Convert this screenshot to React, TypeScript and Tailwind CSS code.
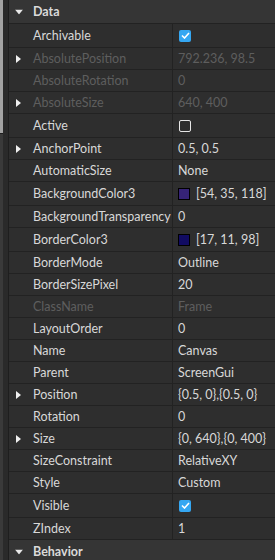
import React from 'react'

type Kind = 'text' | 'check' | 'color'

interface Prop {
  name: string
  value: string
  kind?: Kind
  checked?: boolean
  swatch?: string
  expand?: boolean
  disabled?: boolean
}

const props: Prop[] = [
  { name: 'Archivable', value: '', kind: 'check', checked: true },
  { name: 'AbsolutePosition', value: '792.236, 98.5', expand: true, disabled: true },
  { name: 'AbsoluteRotation', value: '0', disabled: true },
  { name: 'AbsoluteSize', value: '640, 400', expand: true, disabled: true },
  { name: 'Active', value: '', kind: 'check', checked: false },
  { name: 'AnchorPoint', value: '0.5, 0.5', expand: true },
  { name: 'AutomaticSize', value: 'None' },
  { name: 'BackgroundColor3', value: '[54, 35, 118]', kind: 'color', swatch: '#362376' },
  { name: 'BackgroundTransparency', value: '0' },
  { name: 'BorderColor3', value: '[17, 11, 98]', kind: 'color', swatch: '#110b62' },
  { name: 'BorderMode', value: 'Outline' },
  { name: 'BorderSizePixel', value: '20' },
  { name: 'ClassName', value: 'Frame', disabled: true },
  { name: 'LayoutOrder', value: '0' },
  { name: 'Name', value: 'Canvas' },
  { name: 'Parent', value: 'ScreenGui' },
  { name: 'Position', value: '{0.5, 0},{0.5, 0}', expand: true },
  { name: 'Rotation', value: '0' },
  { name: 'Size', value: '{0, 640},{0, 400}', expand: true },
  { name: 'SizeConstraint', value: 'RelativeXY' },
  { name: 'Style', value: 'Custom' },
  { name: 'Visible', value: '', kind: 'check', checked: true },
  { name: 'ZIndex', value: '1' },
]

function RightArrow() {
  return (
    <svg width="5" height="8" viewBox="0 0 5 8" className="absolute left-[7px] top-1/2 -translate-y-1/2">
      <path d="M0 0 L5 4 L0 8 Z" fill="#f0f0f0" />
    </svg>
  )
}

function DownArrow() {
  return (
    <svg width="8" height="5" viewBox="0 0 8 5" className="absolute left-[6px] top-1/2 -translate-y-1/2">
      <path d="M0 0 L8 0 L4 5 Z" fill="#e8e8e8" />
    </svg>
  )
}

function Checkbox({ checked }: { checked?: boolean }) {
  if (!checked) {
    return <div className="h-[12px] w-[12px] rounded-[2px] border border-[#e6e6e6]" />
  }
  return (
    <div className="flex h-[12px] w-[12px] items-center justify-center rounded-[2px] bg-[#35a7f2]">
      <svg width="9" height="7" viewBox="0 0 9 7">
        <path d="M1 3.5 L3.5 6 L8 1" fill="none" stroke="#ffffff" strokeWidth="1.6" />
      </svg>
    </div>
  )
}

function Header({ title }: { title: string }) {
  return (
    <div className="relative flex h-[24px] shrink-0 items-center border-b border-[#222222] bg-[#353535]">
      <DownArrow />
      <span className="pl-[24px] font-bold text-[#dadada]">{title}</span>
    </div>
  )
}

function Row({ p }: { p: Prop }) {
  const kind = p.kind ?? 'text'
  const h = kind === 'text' ? 'h-[22px]' : 'h-[24px]'
  const tone = p.disabled ? 'text-[#5e5e5e]' : 'text-[#d8d8d8]'
  return (
    <div className={`flex ${h} shrink-0 border-b border-[#222222] bg-[#2e2e2e]`}>
      <div className="relative flex w-[164px] shrink-0 items-center overflow-hidden border-r border-[#222222]">
        {p.expand && <RightArrow />}
        <span className={`pl-[24px] whitespace-nowrap ${tone}`}>{p.name}</span>
      </div>
      <div className={`flex min-w-0 flex-1 items-center pl-[5px] whitespace-nowrap ${tone}`}>
        {kind === 'check' && (
          <div className="pl-[1px]">
            <Checkbox checked={p.checked} />
          </div>
        )}
        {kind === 'color' && (
          <>
            <div className="h-[12px] w-[12px] border border-black" style={{ backgroundColor: p.swatch }} />
            <span className="pl-[6px]">{p.value}</span>
          </>
        )}
        {kind === 'text' && <span>{p.value}</span>}
      </div>
    </div>
  )
}

export default function App() {
  return (
    <div
      className="flex h-[560px] w-[275px] overflow-hidden bg-[#2e2e2e] text-[12.5px] leading-[16px]"
      style={{ fontFamily: 'Lato, "Noto Sans", sans-serif' }}
    >
      <div className="flex w-[3px] shrink-0 flex-col">
        <div className="h-[133px] bg-[#a3a3a3]" />
        <div className="h-px bg-[#1c1c1c]" />
        <div className="flex-1 bg-[#3a3a3a]" />
      </div>
      <div className="w-[5px] shrink-0 bg-[#2a2a2a]" />
      <div className="w-px shrink-0 bg-[#1e1e1e]" />
      <div className="flex min-w-0 flex-1 flex-col overflow-hidden">
        <Header title="Data" />
        {props.map((p) => (
          <Row key={p.name} p={p} />
        ))}
        <Header title="Behavior" />
      </div>
    </div>
  )
}
